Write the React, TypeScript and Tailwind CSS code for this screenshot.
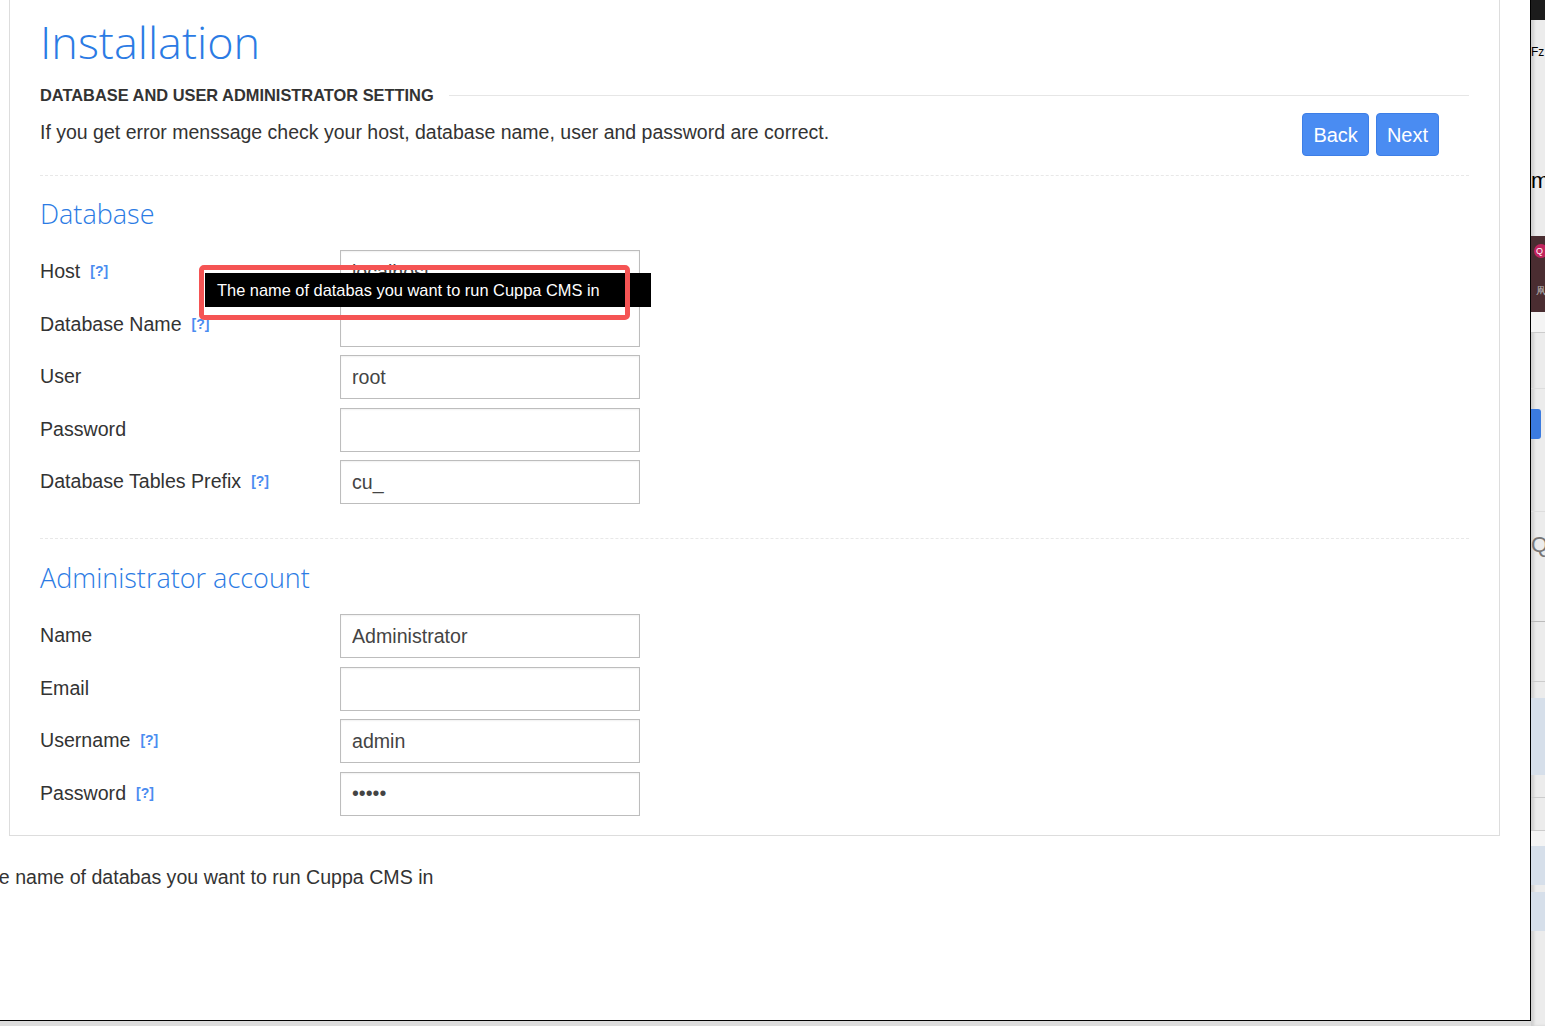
import React from 'react';

const sans = { fontFamily: '"Liberation Sans", Arial, sans-serif' };
const light = { fontFamily: '"Open Sans", "Noto Sans", sans-serif' };

function Help() {
  return <span className="ml-[10px] text-[14px] font-bold text-[#4a8cf0]">[?]</span>;
}

type Row = { label: string; help?: boolean; value?: string; type?: string };

function FormRows({ rows }: { rows: Row[] }) {
  return (
    <div className="flex flex-col gap-y-[8.5px]">
      {rows.map((r) => (
        <div key={r.label} className="flex items-center h-[44px]">
          <div className="w-[300px] flex items-center text-[19.6px] text-[#333]">
            {r.label}
            {r.help && <Help />}
          </div>
          <input
            readOnly
            type={r.type || 'text'}
            value={r.value || ''}
            className="w-[300px] h-[44px] border border-[#bdbdbd] bg-white px-[11px] text-[19.6px] text-[#444] outline-none shadow-[inset_0_1px_2px_rgba(0,0,0,0.06)]"
            style={sans}
          />
        </div>
      ))}
    </div>
  );
}

function Sliver() {
  return (
    <div className="absolute left-[1531px] top-0 w-[14px] h-[1026px] flex flex-col bg-[#ececec] shadow-[inset_3px_0_3px_rgba(0,0,0,0.12)] overflow-hidden">
      <div className="h-[20px] bg-[#1c1c1c]" />
      <div className="h-[216px] relative text-black">
        <div className="absolute top-[26px] left-0 text-[12px] leading-none">Fz</div>
        <div className="absolute top-[150px] left-0 text-[22px] leading-none">m</div>
      </div>
      <div className="h-[76px] bg-[#4a2d31] relative">
        <div className="absolute left-[3px] top-[8px] w-[14px] h-[14px] rounded-full bg-[#c0245e] text-[9px] text-white leading-[14px] pl-[2px]">Q</div>
        <div className="absolute left-[5px] top-[50px] text-[10px] text-[#bbb] leading-none">凧</div>
      </div>
      <div className="h-[21px] bg-[#f4f4f4] border-b border-[#ccc]" />
      <div className="h-[56px] border-b border-[#ddd]" />
      <div className="h-[20px]" />
      <div className="h-[30px] w-[10px] bg-[#3b7be0] rounded-r-[3px]" />
      <div className="h-[73px] border-b border-[#ddd]" />
      <div className="h-[110px] border-b border-[#bbb] relative">
        <div className="absolute top-[22px] left-0 text-[22px] leading-none text-[#777]">Q</div>
      </div>
      <div className="h-[60px] border-b border-[#ccc]" />
      <div className="h-[16px]" />
      <div className="h-[77px] bg-[#d6dfea]" />
      <div className="h-[23px] border-b border-[#ccc]" />
      <div className="h-[33px] border-b border-[#ccc]" />
      <div className="h-[15px] bg-[#f4f4f4]" />
      <div className="h-[39px] bg-[#d6dfea]" />
      <div className="h-[7px]" />
      <div className="h-[39px] bg-[#d6dfea]" />
      <div className="flex-1" />
    </div>
  );
}

export default function App() {
  return (
    <div className="relative w-[1545px] h-[1026px] overflow-hidden bg-[#dcdcdc]" style={sans}>
      <div className="w-[1531px] h-[1021px] bg-white border-r border-b border-black overflow-hidden">
        <div className="ml-[9px] w-[1491px] border-x border-b border-[#dddddd] px-[30px] pb-[19px]">
          <div className="pt-[17px]">
            <h1 className="text-[45px] leading-[50px] font-light text-[#2b7be4]" style={light}>
              Installation
            </h1>
          </div>
          <div className="mt-[18px] h-[20px] flex items-center gap-[15px]">
            <span className="text-[16.4px] font-bold text-[#333] whitespace-nowrap">
              DATABASE AND USER ADMINISTRATOR SETTING
            </span>
            <div className="flex-1 h-px bg-[#e6e6e6]" />
          </div>
          <div className="mt-[8px] h-[43px] flex justify-between">
            <p className="mt-[7px] text-[19.5px] leading-[24px] text-[#333] whitespace-nowrap">
              If you get error menssage check your host, database name, user and password are correct.
            </p>
            <div className="flex gap-[7px] mr-[30px]">
              <button className="h-[43px] px-[10px] rounded-[4px] bg-[#4a8cf2] border border-[#3d7ee6] text-white text-[20px]">
                Back
              </button>
              <button className="h-[43px] px-[10px] rounded-[4px] bg-[#4a8cf2] border border-[#3d7ee6] text-white text-[20px]">
                Next
              </button>
            </div>
          </div>
          <div className="mt-[19px] border-t border-dashed border-[#e8e8e8]" />
          <h2 className="mt-[20px] text-[27px] leading-[36px] font-light text-[#2b7be4]" style={light}>
            Database
          </h2>
          <div className="mt-[18px]">
            <FormRows
              rows={[
                { label: 'Host', help: true, value: 'localhost' },
                { label: 'Database Name', help: true },
                { label: 'User', value: 'root' },
                { label: 'Password', type: 'password' },
                { label: 'Database Tables Prefix', help: true, value: 'cu_' },
              ]}
            />
          </div>
          <div className="mt-[34px] border-t border-dashed border-[#e8e8e8]" />
          <h2 className="mt-[21px] text-[27px] leading-[36px] font-light text-[#2b7be4]" style={light}>
            Administrator account
          </h2>
          <div className="mt-[18px]">
            <FormRows
              rows={[
                { label: 'Name', value: 'Administrator' },
                { label: 'Email' },
                { label: 'Username', help: true, value: 'admin' },
                { label: 'Password', help: true, value: 'admin', type: 'password' },
              ]}
            />
          </div>
        </div>
        <p className="mt-[29px] ml-[-24px] text-[19.6px] leading-[24px] text-[#333] whitespace-nowrap">
          The name of databas you want to run Cuppa CMS in
        </p>
      </div>

      {/* tooltip */}
      <div className="absolute left-[205px] top-[273px] w-[446px] h-[34px] bg-black text-white text-[16.4px] flex items-center pl-[12px]">
        The name of databas you want to run Cuppa CMS in
      </div>
      {/* annotation box */}
      <div className="absolute left-[199px] top-[265px] w-[431px] h-[55px] border-[5px] border-[#f55454] rounded-[5px]" />

      <Sliver />
    </div>
  );
}
